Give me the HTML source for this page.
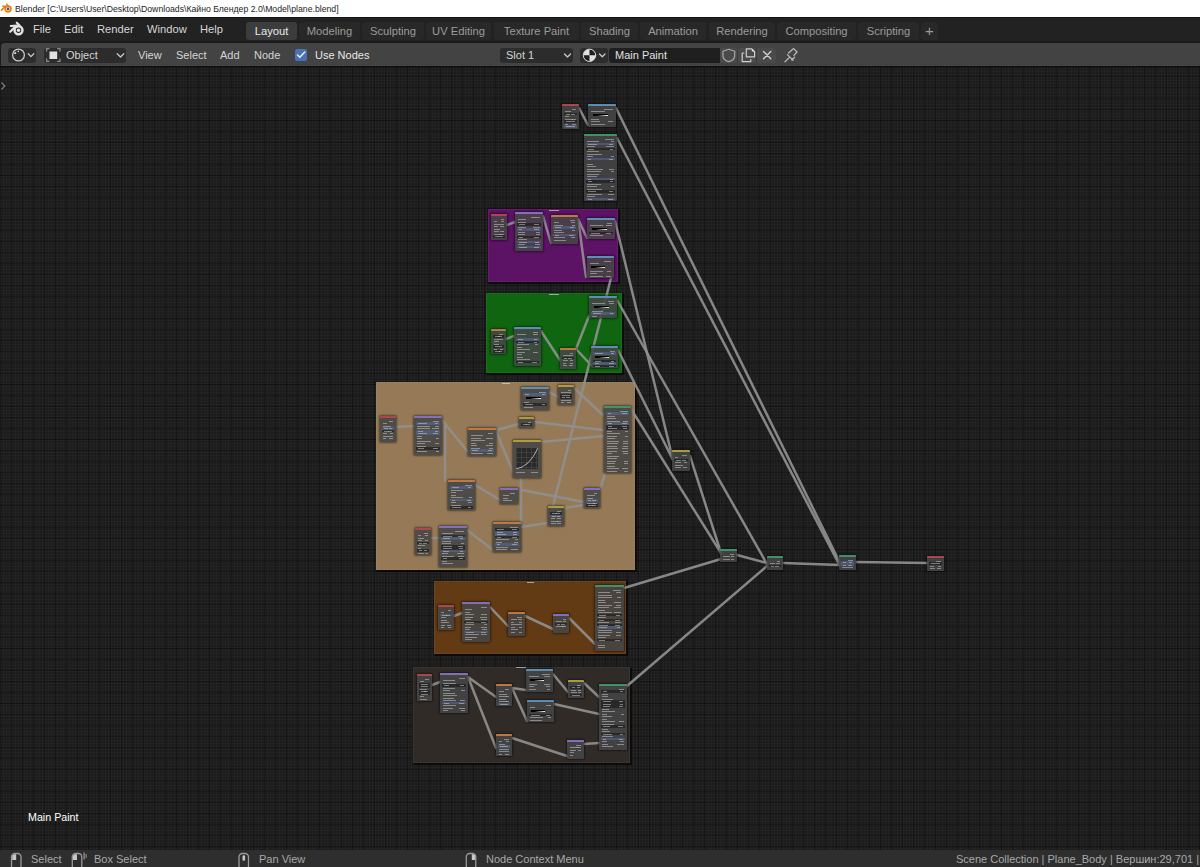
<!DOCTYPE html>
<html><head><meta charset="utf-8">
<style>
*{margin:0;padding:0;box-sizing:border-box}
html,body{width:1200px;height:867px;overflow:hidden;background:#1c1c1c;font-family:"Liberation Sans",sans-serif}
.abs{position:absolute}
#title{position:absolute;left:0;top:0;width:1200px;height:17px;background:#fff;color:#222;font-size:8.7px;line-height:17px;white-space:nowrap}
#title span{position:absolute;left:15px;top:1px}
#topbar{position:absolute;left:0;top:17px;width:1200px;height:26px;background:#222;border-top:1px solid #141414;border-bottom:2px solid #1b1b1b}
.tab{position:absolute;top:4px;height:18px;background:#282828;border-radius:3px;color:#9b9b9b;font-size:11.2px;line-height:18px;text-align:center;white-space:nowrap}
.tab.act{background:#3c3c3c;color:#eaeaea}
.mn{position:absolute;color:#d6d6d6;font-size:11.2px;line-height:14px;white-space:nowrap}
#header{position:absolute;left:1px;top:43px;width:1199px;height:23px;background:#434343;border-radius:4px 0 0 0}
.wd{position:absolute;top:4.5px;height:15px;background:#2c2c2c;border-radius:3px}
.ht{position:absolute;top:5px;color:#d4d4d4;font-size:11px;line-height:15px;white-space:nowrap}
#canvas{position:absolute;left:0;top:66px;width:1200px;height:784px;background-color:#1c1c1c;
 background-image:linear-gradient(90deg,rgba(0,0,0,0.28) 1px,transparent 1px),linear-gradient(0deg,rgba(0,0,0,0.28) 1px,transparent 1px),
 linear-gradient(90deg,rgba(255,255,255,0.025) 1px,transparent 1px),linear-gradient(0deg,rgba(255,255,255,0.025) 1px,transparent 1px);
 background-size:11px 11px,11px 11px,3px 3px,3px 3px;overflow:hidden}
#status{position:absolute;left:0;top:850px;width:1200px;height:17px;background:#2e2e2e;color:#a8a8a8;font-size:11px;line-height:17px;white-space:nowrap}
#status span{position:absolute;top:1px}
.fr{position:absolute;box-shadow:inset 0 0 0 1px rgba(255,255,255,0.05),0 0 1px 1.5px rgba(0,0,0,0.6)}
.lk{position:absolute;left:0;top:0}
.lk line{stroke:#909090;stroke-width:2.5;stroke-linecap:round;opacity:0.92}
.nd{position:absolute;background:rgba(70,70,70,0.88);border-radius:1px;overflow:hidden;box-shadow:0 0 2px 1px rgba(0,0,0,0.45)}
.nd i{position:absolute;left:0;top:0;right:0;height:2.4px;opacity:0.9}
.nd b{position:absolute;height:1px;background:rgba(210,210,210,0.5)}
.nd u{position:absolute;left:2px;right:2px;height:2.6px}
.nd p{position:absolute;height:2px;background:linear-gradient(90deg,#000 0,#000 25%,#fff 100%);border-top:1px solid #000}
.nd s{position:absolute;background:#2a2a2a;background-image:linear-gradient(90deg,rgba(255,255,255,0.08) 1px,transparent 1px),linear-gradient(0deg,rgba(255,255,255,0.08) 1px,transparent 1px);background-size:5px 5px}
</style></head><body>
<div id="title"><svg class="abs" style="left:0;top:0" width="16" height="16" viewBox="0 0 16 16"><g stroke="#e87d0d" stroke-linecap="round" fill="none"><circle cx="8.1" cy="8.9" r="2.8" stroke-width="1.7"/><line x1="6.6" y1="4.2" x2="8.2" y2="6" stroke-width="1.5"/><line x1="2.8" y1="6.3" x2="6.8" y2="6.2" stroke-width="1.6"/><line x1="1.5" y1="10.2" x2="4.6" y2="7.4" stroke-width="1.6"/></g><circle cx="8.1" cy="8.9" r="1.3" fill="#2f5d7c"/></svg><span>Blender [C:\Users\User\Desktop\Downloads\Кайно Блендер 2.0\Model\plane.blend]</span></div>
<div id="topbar">
<svg class="abs" style="left:5px;top:0px" width="25" height="22" viewBox="0 0 25 22"><g stroke="#e2e2e2" stroke-linecap="round" fill="none" stroke-width="2.2"><circle cx="13.5" cy="12.2" r="3.95" stroke-width="2.5"/><line x1="11.8" y1="4.7" x2="14.6" y2="7.6"/><line x1="5.8" y1="8" x2="12.3" y2="7.6"/><line x1="5.2" y1="13.7" x2="9.8" y2="9.1"/></g><circle cx="13.5" cy="12.2" r="1.8" fill="#e2e2e2"/></svg>
<span class="mn" style="left:33px;top:4px">File</span>
<span class="mn" style="left:64px;top:4px">Edit</span>
<span class="mn" style="left:97px;top:4px">Render</span>
<span class="mn" style="left:147px;top:4px">Window</span>
<span class="mn" style="left:200px;top:4px">Help</span>
<div class="tab act" style="left:246px;width:51px">Layout</div>
<div class="tab" style="left:299px;width:61px">Modeling</div>
<div class="tab" style="left:362px;width:62px">Sculpting</div>
<div class="tab" style="left:426px;width:65px">UV Editing</div>
<div class="tab" style="left:494px;width:85px">Texture Paint</div>
<div class="tab" style="left:581px;width:57px">Shading</div>
<div class="tab" style="left:640px;width:66px">Animation</div>
<div class="tab" style="left:709px;width:66px">Rendering</div>
<div class="tab" style="left:777px;width:79px">Compositing</div>
<div class="tab" style="left:858px;width:61px">Scripting</div>
<div class="tab" style="left:921px;width:17px;font-size:15px">+</div>
</div>
<div id="header">
<div class="wd" style="left:7px;width:28px"></div>
<div class="wd" style="left:43px;width:82px"></div>
<span class="ht" style="left:65px">Object</span>
<span class="ht" style="left:137px">View</span>
<span class="ht" style="left:175px">Select</span>
<span class="ht" style="left:219px">Add</span>
<span class="ht" style="left:253px">Node</span>
<div class="abs" style="left:294px;top:5.7px;width:12px;height:12px;background:#4772b3;border-radius:2px"></div>
<span class="ht" style="left:314px;color:#e6e6e6">Use Nodes</span>
<div class="wd" style="left:499px;width:73px"></div>
<span class="ht" style="left:505px">Slot 1</span>
<div class="wd" style="left:579px;width:28px"></div>
<div class="wd" style="left:608px;width:112px;background:#1f1f1f;border-radius:3px 0 0 3px"></div>
<span class="ht" style="left:614px;color:#e0e0e0">Main Paint</span>
<div class="wd" style="left:719px;width:56px;background:#4a4a4a;border-radius:0 3px 3px 0"></div>
<div class="abs" style="left:736px;top:4px;width:1px;height:16px;background:#3a3a3a"></div><div class="abs" style="left:755px;top:4px;width:1px;height:16px;background:#3a3a3a"></div>
<svg class="abs" style="left:-1px;top:-43px" width="1200" height="70" viewBox="0 0 1200 70">
<g fill="none" stroke-linecap="round" stroke-linejoin="round">
<circle cx="18.5" cy="55" r="5.9" stroke="#c9c9c9" stroke-width="1.3"/>
<circle cx="15.2" cy="53.2" r="1.1" fill="#d0d0d0" stroke="none"/><circle cx="18.3" cy="51.4" r="0.8" fill="#d0d0d0" stroke="none"/>
<polyline points="28.3,53.8 31,56.6 33.8,53.8" stroke="#c9c9c9" stroke-width="1.3"/>
<path d="M46.6 51 V48.6 H49 M57.6 48.6 H60 V51 M60 59 V61.4 H57.6 M49 61.4 H46.6 V59" stroke="#8a8a8a" stroke-width="1.3"/>
<rect x="49.5" y="51.5" width="7.7" height="7.5" fill="#e2e2e2" stroke="none"/>
<polyline points="117.2,53.8 120.5,57 123.8,53.8" stroke="#c9c9c9" stroke-width="1.3"/>
<polyline points="297.5,55 299.8,57.3 304.8,52" stroke="#e8eeff" stroke-width="1.5"/>
<polyline points="564.5,54 567.5,57 570.5,54" stroke="#c9c9c9" stroke-width="1.3"/>
<circle cx="589.5" cy="55.3" r="6.2" fill="#e0e0e0" stroke="none"/>
<path d="M589.5 55.3 V49.1 A6.2 6.2 0 0 1 595.7 55.3 Z" fill="#1e1e1e" stroke="none"/>
<path d="M589.5 55.3 V61.5 A6.2 6.2 0 0 1 583.3 55.3 Z" fill="#1e1e1e" stroke="none"/>
<circle cx="589.5" cy="55.3" r="6.2" stroke="#d8d8d8" stroke-width="1"/>
<polyline points="599.5,54 602.3,56.8 605,54" stroke="#c9c9c9" stroke-width="1.3"/>
<path d="M728.8 49.3 L734.7 51.3 V55.5 C734.7 58.8 732.2 60.7 728.8 61.7 C725.4 60.7 722.9 58.8 722.9 55.5 V51.3 Z" stroke="#a8a8a8" stroke-width="1.2"/>
<path d="M746.3 56.8 V48.8 H751.8 L754.6 51.6 V56.8 Z" stroke="#cfcfcf" stroke-width="1.2"/>
<path d="M751.8 48.8 L754.6 51.6 H751.8 Z" fill="#e0e0e0" stroke="none"/>
<path d="M743.8 53 H742.2 V61.6 H750.8 V59.6" stroke="#cfcfcf" stroke-width="1.2"/>
<path d="M763.5 51.5 L770.8 58.8 M770.8 51.5 L763.5 58.8" stroke="#d0d0d0" stroke-width="1.4"/>
<path d="M790.2 51.5 L793.6 48.6 L797 52 L794 55.4 M787.4 54.6 L793 60.2 M788.6 53 L791.6 50.2 M794.6 57.2 L791.8 60 M785 61.8 L789.4 57.4" stroke="#b8b8b8" stroke-width="1.3"/>
</g></svg>
</div>
<div id="canvas"></div>
<div class="abs" style="left:0;top:66px;width:1200px;height:784px;overflow:hidden">
<div style="position:absolute;left:0;top:-66px;width:1200px;height:867px">
<div class="fr" style="left:488px;top:209px;width:130px;height:73px;background:#5c1265"></div>
<div class="fr" style="left:486px;top:293px;width:136px;height:80px;background:#0f6510"></div>
<div class="fr" style="left:376px;top:382px;width:259px;height:188px;background:#967a57"></div>
<div class="fr" style="left:434px;top:581px;width:192px;height:73px;background:#623a13"></div>
<div class="fr" style="left:413px;top:667px;width:217px;height:96px;background:#312b28"></div>
<div style="position:absolute;left:549px;top:210px;width:10px;height:1.3px;background:rgba(230,230,230,0.6)"></div>
<div style="position:absolute;left:549px;top:294px;width:10px;height:1.3px;background:rgba(230,230,230,0.6)"></div>
<div style="position:absolute;left:502px;top:383px;width:8px;height:1.3px;background:rgba(230,230,230,0.6)"></div>
<div style="position:absolute;left:527px;top:582px;width:7px;height:1.3px;background:rgba(230,230,230,0.6)"></div>
<div style="position:absolute;left:516px;top:667px;width:10px;height:1.3px;background:rgba(230,230,230,0.6)"></div>
<svg class="lk" width="1200" height="867" viewBox="0 0 1200 867">
<line x1="579" y1="108" x2="588" y2="125"/>
<line x1="616" y1="108" x2="840" y2="563"/>
<line x1="617" y1="138" x2="840" y2="566"/>
<line x1="507" y1="225" x2="515" y2="222"/>
<line x1="543" y1="216" x2="551" y2="243"/>
<line x1="578" y1="219" x2="587" y2="238"/>
<line x1="578" y1="219" x2="586" y2="277"/>
<line x1="615" y1="221" x2="673" y2="460"/>
<line x1="611" y1="278" x2="553" y2="506"/>
<line x1="506" y1="339" x2="514" y2="336"/>
<line x1="541" y1="331" x2="560" y2="360"/>
<line x1="576" y1="349" x2="589" y2="316"/>
<line x1="576" y1="349" x2="591" y2="365"/>
<line x1="617" y1="300" x2="767" y2="564"/>
<line x1="618" y1="350" x2="673" y2="460"/>
<line x1="396" y1="427" x2="414" y2="426"/>
<line x1="442" y1="420" x2="468" y2="452"/>
<line x1="445" y1="426" x2="445" y2="481"/>
<line x1="496" y1="430" x2="519" y2="424"/>
<line x1="496" y1="431" x2="513" y2="472"/>
<line x1="549" y1="392" x2="558" y2="397"/>
<line x1="574" y1="388" x2="603" y2="415"/>
<line x1="535" y1="422" x2="603" y2="430"/>
<line x1="541" y1="442" x2="603" y2="436"/>
<line x1="475" y1="485" x2="500" y2="500"/>
<line x1="521" y1="478" x2="521" y2="527"/>
<line x1="521" y1="527" x2="548" y2="523"/>
<line x1="522" y1="490" x2="584" y2="502"/>
<line x1="564" y1="508" x2="584" y2="505"/>
<line x1="600" y1="490" x2="606" y2="470"/>
<line x1="431" y1="538" x2="439" y2="538"/>
<line x1="467" y1="530" x2="493" y2="550"/>
<line x1="631" y1="409" x2="721" y2="553"/>
<line x1="690" y1="456" x2="721" y2="553"/>
<line x1="454" y1="616" x2="462" y2="613"/>
<line x1="490" y1="607" x2="508" y2="626"/>
<line x1="525" y1="616" x2="553" y2="629"/>
<line x1="569" y1="618" x2="595" y2="644"/>
<line x1="624" y1="588" x2="721" y2="559"/>
<line x1="432" y1="685" x2="440" y2="682"/>
<line x1="468" y1="677" x2="496" y2="697"/>
<line x1="468" y1="677" x2="496" y2="748"/>
<line x1="512" y1="688" x2="526" y2="690"/>
<line x1="512" y1="688" x2="527" y2="721"/>
<line x1="553" y1="674" x2="568" y2="692"/>
<line x1="584" y1="683" x2="599" y2="697"/>
<line x1="554" y1="704" x2="599" y2="714"/>
<line x1="512" y1="738" x2="567" y2="756"/>
<line x1="584" y1="744" x2="599" y2="743"/>
<line x1="627" y1="686" x2="767" y2="566"/>
<line x1="737" y1="555" x2="767" y2="563"/>
<line x1="783" y1="563" x2="840" y2="565"/>
<line x1="856" y1="562" x2="928" y2="563"/>
</svg>
<div class="nd" style="left:562px;top:104px;width:17px;height:25px"><i style="background:#b9464d"></i><b style="left:10px;top:4.5px;width:4px"></b><b style="left:3px;top:7.0px;width:6px"></b><u style="top:8.5px;background:rgba(24,24,24,0.6)"></u><b style="left:4px;top:9.5px;width:4px"></b><b style="left:9px;top:9.5px;width:4px"></b><b style="left:3px;top:12.0px;width:4px"></b><b style="left:3px;top:14.5px;width:8px"></b><b style="left:10px;top:14.5px;width:4px"></b><u style="top:16.0px;background:rgba(24,24,24,0.6)"></u><b style="left:4px;top:17.0px;width:5px"></b><b style="left:9px;top:17.0px;width:4px"></b><b style="left:3px;top:19.5px;width:3px"></b><b style="left:10px;top:19.5px;width:4px"></b><u style="top:21.0px;background:rgba(84,104,150,0.6)"></u><b style="left:4px;top:22.0px;width:5px"></b><b style="left:9px;top:22.0px;width:4px"></b></div>
<div class="nd" style="left:588px;top:104px;width:28px;height:23px"><i style="background:#5f97c2"></i><b style="left:16px;top:4.5px;width:9px"></b><b style="left:3px;top:7.0px;width:14px"></b><p style="left:5px;top:9.5px;width:15px"></p><b style="left:3px;top:14.5px;width:8px"></b><b style="left:3px;top:17.0px;width:9px"></b><b style="left:20px;top:17.0px;width:5px"></b><b style="left:3px;top:19.5px;width:14px"></b></div>
<div class="nd" style="left:584px;top:134px;width:33px;height:67px"><i style="background:#3f9a70"></i><b style="left:21px;top:4.5px;width:9px"></b><b style="left:3px;top:7.0px;width:12px"></b><b style="left:27px;top:7.0px;width:3px"></b><u style="top:8.5px;background:rgba(84,104,150,0.6)"></u><b style="left:4px;top:9.5px;width:9px"></b><b style="left:25px;top:9.5px;width:4px"></b><b style="left:3px;top:12.0px;width:8px"></b><b style="left:22px;top:12.0px;width:8px"></b><u style="top:13.5px;background:rgba(24,24,24,0.6)"></u><b style="left:4px;top:14.5px;width:6px"></b><b style="left:26px;top:14.5px;width:3px"></b><b style="left:3px;top:17.0px;width:12px"></b><b style="left:3px;top:19.5px;width:15px"></b><b style="left:3px;top:22.0px;width:6px"></b><b style="left:27px;top:22.0px;width:3px"></b><u style="top:23.5px;background:rgba(84,104,150,0.6)"></u><b style="left:4px;top:24.5px;width:3px"></b><b style="left:25px;top:24.5px;width:4px"></b><b style="left:3px;top:29.5px;width:6px"></b><b style="left:3px;top:32.0px;width:9px"></b><b style="left:3px;top:34.5px;width:16px"></b><b style="left:25px;top:34.5px;width:5px"></b><b style="left:3px;top:37.0px;width:14px"></b><b style="left:27px;top:37.0px;width:3px"></b><b style="left:3px;top:39.5px;width:12px"></b><b style="left:3px;top:42.0px;width:10px"></b><u style="top:43.5px;background:rgba(84,104,150,0.6)"></u><b style="left:4px;top:44.5px;width:3px"></b><b style="left:26px;top:44.5px;width:3px"></b><u style="top:46.0px;background:rgba(24,24,24,0.6)"></u><b style="left:4px;top:47.0px;width:4px"></b><b style="left:26px;top:47.0px;width:3px"></b><b style="left:3px;top:49.5px;width:14px"></b><b style="left:3px;top:52.0px;width:10px"></b><b style="left:27px;top:52.0px;width:3px"></b><b style="left:3px;top:54.5px;width:15px"></b><u style="top:56.0px;background:rgba(24,24,24,0.6)"></u><b style="left:4px;top:57.0px;width:8px"></b><b style="left:25px;top:57.0px;width:4px"></b><b style="left:3px;top:59.5px;width:15px"></b><b style="left:24px;top:59.5px;width:6px"></b><b style="left:3px;top:62.0px;width:8px"></b><u style="top:63.5px;background:rgba(84,104,150,0.6)"></u><b style="left:4px;top:64.5px;width:4px"></b><b style="left:24px;top:64.5px;width:5px"></b></div>
<div class="nd" style="left:491px;top:214px;width:16px;height:26px"><i style="background:#b9464d"></i><b style="left:10px;top:4.5px;width:3px"></b><b style="left:3px;top:7.0px;width:3px"></b><b style="left:10px;top:7.0px;width:3px"></b><b style="left:3px;top:9.5px;width:7px"></b><b style="left:10px;top:9.5px;width:3px"></b><b style="left:3px;top:12.0px;width:4px"></b><b style="left:9px;top:12.0px;width:4px"></b><b style="left:3px;top:14.5px;width:6px"></b><b style="left:3px;top:17.0px;width:5px"></b><b style="left:9px;top:17.0px;width:4px"></b><b style="left:3px;top:19.5px;width:7px"></b><b style="left:9px;top:19.5px;width:4px"></b><u style="top:21.0px;background:rgba(24,24,24,0.6)"></u><b style="left:4px;top:22.0px;width:5px"></b><b style="left:9px;top:22.0px;width:3px"></b></div>
<div class="nd" style="left:515px;top:212px;width:28px;height:39px"><i style="background:#8a74c6"></i><b style="left:16px;top:4.5px;width:9px"></b><b style="left:3px;top:7.0px;width:8px"></b><b style="left:3px;top:9.5px;width:8px"></b><u style="top:11.0px;background:rgba(24,24,24,0.6)"></u><b style="left:4px;top:12.0px;width:6px"></b><b style="left:19px;top:12.0px;width:5px"></b><b style="left:3px;top:14.5px;width:8px"></b><b style="left:18px;top:14.5px;width:7px"></b><u style="top:16.0px;background:rgba(84,104,150,0.6)"></u><b style="left:4px;top:17.0px;width:3px"></b><b style="left:19px;top:17.0px;width:5px"></b><b style="left:3px;top:19.5px;width:7px"></b><b style="left:21px;top:19.5px;width:4px"></b><b style="left:3px;top:22.0px;width:7px"></b><b style="left:21px;top:22.0px;width:4px"></b><u style="top:23.5px;background:rgba(24,24,24,0.6)"></u><b style="left:4px;top:24.5px;width:4px"></b><b style="left:19px;top:24.5px;width:5px"></b><b style="left:3px;top:27.0px;width:9px"></b><u style="top:28.5px;background:rgba(84,104,150,0.6)"></u><b style="left:4px;top:29.5px;width:8px"></b><b style="left:20px;top:29.5px;width:4px"></b><b style="left:3px;top:32.0px;width:7px"></b><b style="left:20px;top:32.0px;width:5px"></b><u style="top:33.5px;background:rgba(84,104,150,0.6)"></u><b style="left:4px;top:34.5px;width:8px"></b><b style="left:19px;top:34.5px;width:5px"></b></div>
<div class="nd" style="left:551px;top:215px;width:27px;height:29px"><i style="background:#c97e45"></i><b style="left:19px;top:4.5px;width:5px"></b><b style="left:3px;top:7.0px;width:5px"></b><b style="left:20px;top:7.0px;width:4px"></b><b style="left:3px;top:9.5px;width:9px"></b><b style="left:21px;top:9.5px;width:3px"></b><u style="top:11.0px;background:rgba(84,104,150,0.6)"></u><b style="left:4px;top:12.0px;width:6px"></b><b style="left:19px;top:12.0px;width:4px"></b><b style="left:3px;top:14.5px;width:8px"></b><b style="left:21px;top:14.5px;width:3px"></b><b style="left:3px;top:17.0px;width:10px"></b><u style="top:18.5px;background:rgba(84,104,150,0.6)"></u><b style="left:4px;top:19.5px;width:4px"></b><b style="left:18px;top:19.5px;width:5px"></b><b style="left:3px;top:22.0px;width:11px"></b><b style="left:20px;top:22.0px;width:4px"></b><b style="left:3px;top:24.5px;width:12px"></b></div>
<div class="nd" style="left:587px;top:218px;width:28px;height:21px"><i style="background:#5f97c2"></i><b style="left:20px;top:4.5px;width:5px"></b><b style="left:3px;top:7.0px;width:13px"></b><b style="left:19px;top:7.0px;width:6px"></b><p style="left:5px;top:9.5px;width:15px"></p><u style="top:13.5px;background:rgba(24,24,24,0.6)"></u><b style="left:4px;top:14.5px;width:9px"></b><b style="left:19px;top:14.5px;width:5px"></b><b style="left:3px;top:17.0px;width:13px"></b></div>
<div class="nd" style="left:587px;top:256px;width:27px;height:22px"><i style="background:#5f97c2"></i><b style="left:17px;top:4.5px;width:7px"></b><b style="left:3px;top:7.0px;width:9px"></b><p style="left:4px;top:9.5px;width:14px"></p><b style="left:3px;top:14.5px;width:13px"></b><b style="left:20px;top:14.5px;width:4px"></b><b style="left:3px;top:17.0px;width:7px"></b><b style="left:3px;top:19.5px;width:13px"></b><b style="left:19px;top:19.5px;width:5px"></b></div>
<div class="nd" style="left:491px;top:329px;width:15px;height:25px"><i style="background:#c97e45"></i><b style="left:8px;top:4.5px;width:4px"></b><u style="top:6.0px;background:rgba(24,24,24,0.6)"></u><b style="left:4px;top:7.0px;width:5px"></b><b style="left:7px;top:7.0px;width:4px"></b><b style="left:3px;top:9.5px;width:5px"></b><b style="left:8px;top:9.5px;width:4px"></b><b style="left:3px;top:12.0px;width:5px"></b><b style="left:3px;top:14.5px;width:5px"></b><u style="top:16.0px;background:rgba(24,24,24,0.6)"></u><b style="left:4px;top:17.0px;width:3px"></b><b style="left:7px;top:17.0px;width:4px"></b><b style="left:3px;top:19.5px;width:3px"></b><b style="left:9px;top:19.5px;width:3px"></b><u style="top:21.0px;background:rgba(24,24,24,0.6)"></u><b style="left:4px;top:22.0px;width:5px"></b><b style="left:8px;top:22.0px;width:3px"></b></div>
<div class="nd" style="left:514px;top:327px;width:27px;height:39px"><i style="background:#5f97c2"></i><b style="left:19px;top:4.5px;width:5px"></b><b style="left:3px;top:7.0px;width:9px"></b><b style="left:19px;top:7.0px;width:5px"></b><u style="top:11.0px;background:rgba(84,104,150,0.6)"></u><b style="left:4px;top:12.0px;width:5px"></b><b style="left:20px;top:12.0px;width:3px"></b><u style="top:13.5px;background:rgba(24,24,24,0.6)"></u><b style="left:4px;top:14.5px;width:6px"></b><b style="left:20px;top:14.5px;width:3px"></b><b style="left:3px;top:17.0px;width:12px"></b><b style="left:21px;top:17.0px;width:3px"></b><b style="left:3px;top:19.5px;width:5px"></b><b style="left:3px;top:22.0px;width:13px"></b><b style="left:3px;top:24.5px;width:8px"></b><b style="left:19px;top:24.5px;width:5px"></b><b style="left:3px;top:27.0px;width:5px"></b><b style="left:3px;top:29.5px;width:6px"></b><b style="left:3px;top:32.0px;width:13px"></b><u style="top:33.5px;background:rgba(24,24,24,0.6)"></u><b style="left:4px;top:34.5px;width:5px"></b><b style="left:18px;top:34.5px;width:5px"></b></div>
<div class="nd" style="left:560px;top:348px;width:16px;height:21px"><i style="background:#c97e45"></i><b style="left:10px;top:4.5px;width:3px"></b><b style="left:3px;top:7.0px;width:7px"></b><b style="left:9px;top:7.0px;width:4px"></b><u style="top:8.5px;background:rgba(24,24,24,0.6)"></u><b style="left:4px;top:9.5px;width:3px"></b><b style="left:8px;top:9.5px;width:4px"></b><b style="left:3px;top:12.0px;width:5px"></b><b style="left:10px;top:12.0px;width:3px"></b><b style="left:3px;top:14.5px;width:3px"></b><b style="left:10px;top:14.5px;width:3px"></b><b style="left:3px;top:17.0px;width:4px"></b><b style="left:9px;top:17.0px;width:4px"></b></div>
<div class="nd" style="left:589px;top:296px;width:28px;height:22px"><i style="background:#5f97c2"></i><b style="left:19px;top:4.5px;width:6px"></b><b style="left:3px;top:7.0px;width:13px"></b><b style="left:20px;top:7.0px;width:5px"></b><p style="left:5px;top:9.5px;width:15px"></p><b style="left:3px;top:14.5px;width:11px"></b><u style="top:16.0px;background:rgba(84,104,150,0.6)"></u><b style="left:4px;top:17.0px;width:8px"></b><b style="left:21px;top:17.0px;width:3px"></b><b style="left:3px;top:19.5px;width:5px"></b></div>
<div class="nd" style="left:591px;top:346px;width:27px;height:22px"><i style="background:#5f97c2"></i><b style="left:19px;top:4.5px;width:5px"></b><u style="top:6.0px;background:rgba(84,104,150,0.6)"></u><b style="left:4px;top:7.0px;width:8px"></b><b style="left:20px;top:7.0px;width:3px"></b><p style="left:4px;top:9.5px;width:14px"></p><u style="top:13.5px;background:rgba(24,24,24,0.6)"></u><b style="left:4px;top:14.5px;width:6px"></b><b style="left:20px;top:14.5px;width:3px"></b><u style="top:16.0px;background:rgba(84,104,150,0.6)"></u><b style="left:4px;top:17.0px;width:4px"></b><b style="left:18px;top:17.0px;width:5px"></b><u style="top:18.5px;background:rgba(24,24,24,0.6)"></u><b style="left:4px;top:19.5px;width:5px"></b><b style="left:18px;top:19.5px;width:5px"></b></div>
<div class="nd" style="left:380px;top:416px;width:16px;height:26px"><i style="background:#b9464d"></i><b style="left:9px;top:4.5px;width:4px"></b><b style="left:3px;top:7.0px;width:4px"></b><b style="left:3px;top:9.5px;width:8px"></b><u style="top:11.0px;background:rgba(84,104,150,0.6)"></u><b style="left:4px;top:12.0px;width:4px"></b><b style="left:9px;top:12.0px;width:3px"></b><u style="top:13.5px;background:rgba(24,24,24,0.6)"></u><b style="left:4px;top:14.5px;width:5px"></b><b style="left:8px;top:14.5px;width:4px"></b><b style="left:3px;top:17.0px;width:4px"></b><b style="left:10px;top:17.0px;width:3px"></b><b style="left:3px;top:19.5px;width:6px"></b><b style="left:9px;top:19.5px;width:4px"></b><b style="left:3px;top:22.0px;width:3px"></b><b style="left:9px;top:22.0px;width:4px"></b></div>
<div class="nd" style="left:414px;top:416px;width:28px;height:39px"><i style="background:#8a74c6"></i><b style="left:19px;top:4.5px;width:6px"></b><u style="top:6.0px;background:rgba(84,104,150,0.6)"></u><b style="left:4px;top:7.0px;width:9px"></b><b style="left:21px;top:7.0px;width:3px"></b><b style="left:3px;top:9.5px;width:13px"></b><b style="left:21px;top:9.5px;width:4px"></b><b style="left:3px;top:12.0px;width:13px"></b><b style="left:18px;top:12.0px;width:7px"></b><u style="top:13.5px;background:rgba(84,104,150,0.6)"></u><b style="left:4px;top:14.5px;width:5px"></b><b style="left:21px;top:14.5px;width:3px"></b><u style="top:16.0px;background:rgba(84,104,150,0.6)"></u><b style="left:4px;top:17.0px;width:9px"></b><b style="left:19px;top:17.0px;width:5px"></b><b style="left:3px;top:19.5px;width:5px"></b><b style="left:3px;top:22.0px;width:5px"></b><b style="left:22px;top:22.0px;width:3px"></b><b style="left:3px;top:24.5px;width:14px"></b><b style="left:3px;top:27.0px;width:8px"></b><b style="left:21px;top:27.0px;width:4px"></b><b style="left:3px;top:29.5px;width:9px"></b><u style="top:31.0px;background:rgba(24,24,24,0.6)"></u><b style="left:4px;top:32.0px;width:6px"></b><b style="left:19px;top:32.0px;width:5px"></b><b style="left:3px;top:34.5px;width:10px"></b><b style="left:22px;top:34.5px;width:3px"></b></div>
<div class="nd" style="left:468px;top:428px;width:28px;height:28px"><i style="background:#c97e45"></i><b style="left:20px;top:4.5px;width:5px"></b><b style="left:3px;top:7.0px;width:12px"></b><b style="left:3px;top:9.5px;width:10px"></b><b style="left:18px;top:9.5px;width:7px"></b><b style="left:3px;top:12.0px;width:14px"></b><b style="left:3px;top:14.5px;width:5px"></b><b style="left:21px;top:14.5px;width:4px"></b><b style="left:3px;top:17.0px;width:6px"></b><b style="left:18px;top:17.0px;width:7px"></b><b style="left:3px;top:19.5px;width:9px"></b><b style="left:21px;top:19.5px;width:4px"></b><u style="top:21.0px;background:rgba(84,104,150,0.6)"></u><b style="left:4px;top:22.0px;width:6px"></b><b style="left:20px;top:22.0px;width:4px"></b><b style="left:3px;top:24.5px;width:12px"></b><b style="left:19px;top:24.5px;width:6px"></b></div>
<div class="nd" style="left:521px;top:387px;width:28px;height:23px"><i style="background:#5f97c2"></i><b style="left:18px;top:4.5px;width:7px"></b><u style="top:6.0px;background:rgba(84,104,150,0.6)"></u><b style="left:4px;top:7.0px;width:4px"></b><b style="left:21px;top:7.0px;width:3px"></b><p style="left:5px;top:9.5px;width:15px"></p><b style="left:3px;top:14.5px;width:5px"></b><u style="top:16.0px;background:rgba(24,24,24,0.6)"></u><b style="left:4px;top:17.0px;width:8px"></b><b style="left:21px;top:17.0px;width:3px"></b><b style="left:3px;top:19.5px;width:9px"></b></div>
<div class="nd" style="left:558px;top:385px;width:16px;height:20px"><i style="background:#b9a43c"></i><b style="left:10px;top:4.5px;width:3px"></b><b style="left:3px;top:7.0px;width:7px"></b><b style="left:10px;top:7.0px;width:3px"></b><u style="top:8.5px;background:rgba(24,24,24,0.6)"></u><b style="left:4px;top:9.5px;width:4px"></b><b style="left:8px;top:9.5px;width:4px"></b><u style="top:11.0px;background:rgba(24,24,24,0.6)"></u><b style="left:4px;top:12.0px;width:3px"></b><b style="left:8px;top:12.0px;width:4px"></b><b style="left:3px;top:14.5px;width:7px"></b><b style="left:10px;top:14.5px;width:3px"></b><b style="left:3px;top:17.0px;width:3px"></b><b style="left:9px;top:17.0px;width:4px"></b></div>
<div class="nd" style="left:519px;top:417px;width:15px;height:11px"><i style="background:#b9a43c"></i><b style="left:9px;top:4.5px;width:3px"></b><u style="top:6.0px;background:rgba(24,24,24,0.6)"></u><b style="left:4px;top:7.0px;width:4px"></b><b style="left:7px;top:7.0px;width:4px"></b></div>
<div class="nd" style="left:513px;top:440px;width:28px;height:38px"><i style="background:#b9a43c"></i><s style="left:3px;top:8px;width:22px;height:21px"></s><svg style="position:absolute;left:3px;top:8px" width="22" height="21"><path d="M0 21 Q13.2 19 22 0" stroke="#cfcfcf" stroke-width="0.8" fill="none"/></svg><b style="left:3px;top:32px;width:9px"></b><b style="left:18px;top:32px;width:7px"></b></div>
<div class="nd" style="left:604px;top:406px;width:27px;height:67px"><i style="background:#3f9a70"></i><b style="left:16px;top:4.5px;width:8px"></b><u style="top:6.0px;background:rgba(84,104,150,0.6)"></u><b style="left:4px;top:7.0px;width:3px"></b><b style="left:18px;top:7.0px;width:5px"></b><b style="left:3px;top:9.5px;width:8px"></b><b style="left:3px;top:12.0px;width:9px"></b><b style="left:3px;top:14.5px;width:13px"></b><b style="left:19px;top:14.5px;width:5px"></b><u style="top:16.0px;background:rgba(84,104,150,0.6)"></u><b style="left:4px;top:17.0px;width:4px"></b><b style="left:18px;top:17.0px;width:5px"></b><u style="top:18.5px;background:rgba(24,24,24,0.6)"></u><b style="left:4px;top:19.5px;width:4px"></b><b style="left:18px;top:19.5px;width:5px"></b><u style="top:21.0px;background:rgba(24,24,24,0.6)"></u><b style="left:4px;top:22.0px;width:9px"></b><b style="left:19px;top:22.0px;width:4px"></b><b style="left:3px;top:24.5px;width:5px"></b><b style="left:21px;top:24.5px;width:3px"></b><b style="left:3px;top:27.0px;width:13px"></b><b style="left:3px;top:29.5px;width:10px"></b><b style="left:21px;top:29.5px;width:3px"></b><b style="left:3px;top:32.0px;width:8px"></b><b style="left:3px;top:34.5px;width:12px"></b><b style="left:19px;top:34.5px;width:5px"></b><b style="left:3px;top:37.0px;width:11px"></b><b style="left:19px;top:37.0px;width:5px"></b><b style="left:3px;top:39.5px;width:10px"></b><b style="left:19px;top:39.5px;width:5px"></b><b style="left:3px;top:42.0px;width:11px"></b><b style="left:18px;top:42.0px;width:6px"></b><b style="left:3px;top:44.5px;width:10px"></b><b style="left:18px;top:44.5px;width:6px"></b><b style="left:3px;top:47.0px;width:5px"></b><b style="left:19px;top:47.0px;width:5px"></b><b style="left:3px;top:49.5px;width:12px"></b><b style="left:3px;top:52.0px;width:10px"></b><b style="left:3px;top:54.5px;width:9px"></b><b style="left:20px;top:54.5px;width:4px"></b><b style="left:3px;top:57.0px;width:8px"></b><b style="left:20px;top:57.0px;width:4px"></b><b style="left:3px;top:59.5px;width:8px"></b><b style="left:3px;top:62.0px;width:12px"></b><b style="left:18px;top:62.0px;width:6px"></b><b style="left:3px;top:64.5px;width:10px"></b><b style="left:20px;top:64.5px;width:4px"></b></div>
<div class="nd" style="left:448px;top:480px;width:27px;height:30px"><i style="background:#c97e45"></i><b style="left:17px;top:4.5px;width:7px"></b><u style="top:6.0px;background:rgba(84,104,150,0.6)"></u><b style="left:4px;top:7.0px;width:7px"></b><b style="left:20px;top:7.0px;width:3px"></b><b style="left:3px;top:9.5px;width:12px"></b><b style="left:3px;top:12.0px;width:5px"></b><b style="left:3px;top:14.5px;width:5px"></b><b style="left:3px;top:17.0px;width:12px"></b><b style="left:21px;top:17.0px;width:3px"></b><u style="top:18.5px;background:rgba(84,104,150,0.6)"></u><b style="left:4px;top:19.5px;width:3px"></b><b style="left:19px;top:19.5px;width:4px"></b><b style="left:3px;top:22.0px;width:5px"></b><b style="left:20px;top:22.0px;width:4px"></b><b style="left:3px;top:24.5px;width:10px"></b><u style="top:26.0px;background:rgba(24,24,24,0.6)"></u><b style="left:4px;top:27.0px;width:9px"></b><b style="left:20px;top:27.0px;width:3px"></b></div>
<div class="nd" style="left:500px;top:488px;width:18px;height:16px"><i style="background:#8a74c6"></i><b style="left:10px;top:4.5px;width:5px"></b><b style="left:3px;top:7.0px;width:6px"></b><b style="left:3px;top:9.5px;width:5px"></b><b style="left:3px;top:12.0px;width:9px"></b></div>
<div class="nd" style="left:584px;top:488px;width:16px;height:20px"><i style="background:#8a74c6"></i><b style="left:10px;top:4.5px;width:3px"></b><b style="left:3px;top:7.0px;width:8px"></b><b style="left:3px;top:9.5px;width:6px"></b><u style="top:11.0px;background:rgba(84,104,150,0.6)"></u><b style="left:4px;top:12.0px;width:3px"></b><b style="left:8px;top:12.0px;width:4px"></b><b style="left:3px;top:14.5px;width:8px"></b><b style="left:9px;top:14.5px;width:4px"></b><u style="top:16.0px;background:rgba(24,24,24,0.6)"></u><b style="left:4px;top:17.0px;width:5px"></b><b style="left:8px;top:17.0px;width:4px"></b></div>
<div class="nd" style="left:548px;top:506px;width:16px;height:20px"><i style="background:#b9a43c"></i><b style="left:9px;top:4.5px;width:4px"></b><u style="top:6.0px;background:rgba(24,24,24,0.6)"></u><b style="left:4px;top:7.0px;width:5px"></b><b style="left:8px;top:7.0px;width:4px"></b><u style="top:8.5px;background:rgba(84,104,150,0.6)"></u><b style="left:4px;top:9.5px;width:4px"></b><b style="left:9px;top:9.5px;width:3px"></b><b style="left:3px;top:12.0px;width:4px"></b><b style="left:9px;top:12.0px;width:4px"></b><b style="left:3px;top:14.5px;width:7px"></b><b style="left:9px;top:14.5px;width:4px"></b><b style="left:3px;top:17.0px;width:5px"></b><b style="left:9px;top:17.0px;width:4px"></b></div>
<div class="nd" style="left:415px;top:528px;width:16px;height:27px"><i style="background:#b9464d"></i><b style="left:9px;top:4.5px;width:4px"></b><b style="left:3px;top:7.0px;width:3px"></b><b style="left:10px;top:7.0px;width:3px"></b><b style="left:3px;top:9.5px;width:6px"></b><b style="left:3px;top:12.0px;width:4px"></b><b style="left:10px;top:12.0px;width:3px"></b><u style="top:13.5px;background:rgba(24,24,24,0.6)"></u><b style="left:4px;top:14.5px;width:3px"></b><b style="left:8px;top:14.5px;width:4px"></b><b style="left:3px;top:17.0px;width:7px"></b><b style="left:3px;top:19.5px;width:3px"></b><u style="top:21.0px;background:rgba(24,24,24,0.6)"></u><b style="left:4px;top:22.0px;width:3px"></b><b style="left:9px;top:22.0px;width:3px"></b><b style="left:3px;top:24.5px;width:6px"></b><b style="left:10px;top:24.5px;width:3px"></b></div>
<div class="nd" style="left:439px;top:526px;width:28px;height:41px"><i style="background:#8a74c6"></i><b style="left:16px;top:4.5px;width:9px"></b><b style="left:3px;top:7.0px;width:11px"></b><u style="top:8.5px;background:rgba(24,24,24,0.6)"></u><b style="left:4px;top:9.5px;width:9px"></b><b style="left:19px;top:9.5px;width:5px"></b><u style="top:11.0px;background:rgba(84,104,150,0.6)"></u><b style="left:4px;top:12.0px;width:7px"></b><b style="left:21px;top:12.0px;width:3px"></b><b style="left:3px;top:14.5px;width:9px"></b><b style="left:3px;top:17.0px;width:9px"></b><b style="left:22px;top:17.0px;width:3px"></b><u style="top:18.5px;background:rgba(24,24,24,0.6)"></u><b style="left:4px;top:19.5px;width:9px"></b><b style="left:19px;top:19.5px;width:5px"></b><u style="top:21.0px;background:rgba(24,24,24,0.6)"></u><b style="left:4px;top:22.0px;width:9px"></b><b style="left:20px;top:22.0px;width:4px"></b><u style="top:23.5px;background:rgba(84,104,150,0.6)"></u><b style="left:4px;top:24.5px;width:6px"></b><b style="left:21px;top:24.5px;width:3px"></b><b style="left:3px;top:27.0px;width:6px"></b><b style="left:18px;top:27.0px;width:7px"></b><b style="left:3px;top:29.5px;width:12px"></b><b style="left:19px;top:29.5px;width:6px"></b><u style="top:31.0px;background:rgba(24,24,24,0.6)"></u><b style="left:4px;top:32.0px;width:4px"></b><b style="left:20px;top:32.0px;width:4px"></b><b style="left:3px;top:34.5px;width:5px"></b><b style="left:3px;top:37.0px;width:11px"></b></div>
<div class="nd" style="left:493px;top:522px;width:28px;height:30px"><i style="background:#c97e45"></i><b style="left:17px;top:4.5px;width:8px"></b><u style="top:6.0px;background:rgba(24,24,24,0.6)"></u><b style="left:4px;top:7.0px;width:7px"></b><b style="left:19px;top:7.0px;width:5px"></b><u style="top:8.5px;background:rgba(84,104,150,0.6)"></u><b style="left:4px;top:9.5px;width:6px"></b><b style="left:20px;top:9.5px;width:4px"></b><u style="top:11.0px;background:rgba(84,104,150,0.6)"></u><b style="left:4px;top:12.0px;width:9px"></b><b style="left:20px;top:12.0px;width:4px"></b><u style="top:13.5px;background:rgba(24,24,24,0.6)"></u><b style="left:4px;top:14.5px;width:4px"></b><b style="left:19px;top:14.5px;width:5px"></b><b style="left:3px;top:17.0px;width:13px"></b><b style="left:22px;top:17.0px;width:3px"></b><b style="left:3px;top:19.5px;width:6px"></b><b style="left:21px;top:19.5px;width:4px"></b><u style="top:21.0px;background:rgba(84,104,150,0.6)"></u><b style="left:4px;top:22.0px;width:3px"></b><b style="left:19px;top:22.0px;width:5px"></b><b style="left:3px;top:24.5px;width:12px"></b><b style="left:3px;top:27.0px;width:11px"></b><b style="left:18px;top:27.0px;width:7px"></b></div>
<div class="nd" style="left:438px;top:605px;width:16px;height:25px"><i style="background:#b9464d"></i><b style="left:10px;top:4.5px;width:3px"></b><b style="left:3px;top:7.0px;width:3px"></b><u style="top:8.5px;background:rgba(84,104,150,0.6)"></u><b style="left:4px;top:9.5px;width:5px"></b><b style="left:8px;top:9.5px;width:4px"></b><b style="left:3px;top:12.0px;width:5px"></b><b style="left:3px;top:14.5px;width:6px"></b><b style="left:3px;top:17.0px;width:8px"></b><b style="left:3px;top:19.5px;width:4px"></b><b style="left:9px;top:19.5px;width:4px"></b><b style="left:3px;top:22.0px;width:3px"></b><b style="left:10px;top:22.0px;width:3px"></b></div>
<div class="nd" style="left:462px;top:602px;width:28px;height:40px"><i style="background:#8a74c6"></i><b style="left:19px;top:4.5px;width:6px"></b><b style="left:3px;top:7.0px;width:7px"></b><b style="left:3px;top:9.5px;width:5px"></b><b style="left:3px;top:12.0px;width:9px"></b><b style="left:19px;top:12.0px;width:6px"></b><b style="left:3px;top:14.5px;width:8px"></b><b style="left:18px;top:14.5px;width:7px"></b><b style="left:3px;top:17.0px;width:6px"></b><b style="left:19px;top:17.0px;width:6px"></b><u style="top:18.5px;background:rgba(24,24,24,0.6)"></u><b style="left:4px;top:19.5px;width:8px"></b><b style="left:19px;top:19.5px;width:5px"></b><b style="left:3px;top:22.0px;width:9px"></b><b style="left:22px;top:22.0px;width:3px"></b><b style="left:3px;top:24.5px;width:6px"></b><b style="left:19px;top:24.5px;width:6px"></b><b style="left:3px;top:27.0px;width:5px"></b><b style="left:20px;top:27.0px;width:5px"></b><u style="top:28.5px;background:rgba(84,104,150,0.6)"></u><b style="left:4px;top:29.5px;width:8px"></b><b style="left:19px;top:29.5px;width:5px"></b><b style="left:3px;top:32.0px;width:14px"></b><b style="left:19px;top:32.0px;width:6px"></b><b style="left:3px;top:34.5px;width:12px"></b><b style="left:3px;top:37.0px;width:7px"></b></div>
<div class="nd" style="left:508px;top:612px;width:17px;height:24px"><i style="background:#c97e45"></i><b style="left:9px;top:4.5px;width:5px"></b><b style="left:3px;top:7.0px;width:6px"></b><b style="left:10px;top:7.0px;width:4px"></b><b style="left:3px;top:9.5px;width:3px"></b><b style="left:11px;top:9.5px;width:3px"></b><b style="left:3px;top:12.0px;width:8px"></b><b style="left:11px;top:12.0px;width:3px"></b><b style="left:3px;top:14.5px;width:4px"></b><b style="left:11px;top:14.5px;width:3px"></b><b style="left:3px;top:17.0px;width:7px"></b><b style="left:3px;top:19.5px;width:4px"></b><b style="left:11px;top:19.5px;width:3px"></b></div>
<div class="nd" style="left:553px;top:614px;width:16px;height:19px"><i style="background:#8a74c6"></i><b style="left:10px;top:4.5px;width:3px"></b><b style="left:3px;top:7.0px;width:6px"></b><b style="left:10px;top:7.0px;width:3px"></b><u style="top:8.5px;background:rgba(24,24,24,0.6)"></u><b style="left:4px;top:9.5px;width:3px"></b><b style="left:8px;top:9.5px;width:4px"></b><b style="left:3px;top:12.0px;width:8px"></b><b style="left:9px;top:12.0px;width:4px"></b></div>
<div class="nd" style="left:595px;top:585px;width:29px;height:66px"><i style="background:#3f9a70"></i><b style="left:18px;top:4.5px;width:8px"></b><b style="left:3px;top:7.0px;width:12px"></b><b style="left:21px;top:7.0px;width:5px"></b><b style="left:3px;top:9.5px;width:14px"></b><b style="left:3px;top:12.0px;width:14px"></b><b style="left:22px;top:12.0px;width:4px"></b><b style="left:3px;top:14.5px;width:7px"></b><b style="left:3px;top:17.0px;width:8px"></b><b style="left:19px;top:17.0px;width:7px"></b><b style="left:3px;top:19.5px;width:14px"></b><b style="left:21px;top:19.5px;width:5px"></b><b style="left:3px;top:22.0px;width:11px"></b><b style="left:19px;top:22.0px;width:7px"></b><b style="left:3px;top:24.5px;width:7px"></b><b style="left:3px;top:27.0px;width:14px"></b><b style="left:19px;top:27.0px;width:7px"></b><u style="top:28.5px;background:rgba(24,24,24,0.6)"></u><b style="left:4px;top:29.5px;width:7px"></b><b style="left:21px;top:29.5px;width:4px"></b><b style="left:3px;top:32.0px;width:8px"></b><u style="top:33.5px;background:rgba(24,24,24,0.6)"></u><b style="left:4px;top:34.5px;width:5px"></b><b style="left:20px;top:34.5px;width:5px"></b><b style="left:3px;top:37.0px;width:11px"></b><b style="left:20px;top:37.0px;width:6px"></b><u style="top:38.5px;background:rgba(24,24,24,0.6)"></u><b style="left:4px;top:39.5px;width:9px"></b><b style="left:20px;top:39.5px;width:5px"></b><u style="top:41.0px;background:rgba(84,104,150,0.6)"></u><b style="left:4px;top:42.0px;width:8px"></b><b style="left:22px;top:42.0px;width:3px"></b><b style="left:3px;top:44.5px;width:14px"></b><b style="left:3px;top:47.0px;width:14px"></b><b style="left:21px;top:47.0px;width:5px"></b><b style="left:3px;top:49.5px;width:12px"></b><b style="left:21px;top:49.5px;width:5px"></b><b style="left:3px;top:52.0px;width:8px"></b><u style="top:53.5px;background:rgba(24,24,24,0.6)"></u><b style="left:4px;top:54.5px;width:6px"></b><b style="left:20px;top:54.5px;width:5px"></b><b style="left:3px;top:59.5px;width:7px"></b><b style="left:3px;top:62.0px;width:7px"></b></div>
<div class="nd" style="left:417px;top:674px;width:15px;height:27px"><i style="background:#b9464d"></i><b style="left:8px;top:4.5px;width:4px"></b><b style="left:3px;top:7.0px;width:4px"></b><u style="top:8.5px;background:rgba(24,24,24,0.6)"></u><b style="left:4px;top:9.5px;width:4px"></b><b style="left:8px;top:9.5px;width:3px"></b><u style="top:11.0px;background:rgba(24,24,24,0.6)"></u><b style="left:4px;top:12.0px;width:3px"></b><b style="left:7px;top:12.0px;width:4px"></b><b style="left:3px;top:14.5px;width:7px"></b><u style="top:16.0px;background:rgba(24,24,24,0.6)"></u><b style="left:4px;top:17.0px;width:5px"></b><b style="left:7px;top:17.0px;width:4px"></b><u style="top:18.5px;background:rgba(24,24,24,0.6)"></u><b style="left:4px;top:19.5px;width:4px"></b><b style="left:8px;top:19.5px;width:3px"></b><b style="left:3px;top:22.0px;width:4px"></b><b style="left:3px;top:24.5px;width:7px"></b></div>
<div class="nd" style="left:440px;top:673px;width:28px;height:40px"><i style="background:#8a74c6"></i><b style="left:19px;top:4.5px;width:6px"></b><b style="left:3px;top:7.0px;width:12px"></b><b style="left:3px;top:9.5px;width:13px"></b><u style="top:11.0px;background:rgba(24,24,24,0.6)"></u><b style="left:4px;top:12.0px;width:5px"></b><b style="left:20px;top:12.0px;width:4px"></b><b style="left:3px;top:14.5px;width:12px"></b><b style="left:3px;top:17.0px;width:7px"></b><b style="left:21px;top:17.0px;width:4px"></b><b style="left:3px;top:19.5px;width:12px"></b><b style="left:3px;top:22.0px;width:14px"></b><b style="left:3px;top:24.5px;width:11px"></b><b style="left:3px;top:27.0px;width:13px"></b><b style="left:20px;top:27.0px;width:5px"></b><u style="top:28.5px;background:rgba(84,104,150,0.6)"></u><b style="left:4px;top:29.5px;width:5px"></b><b style="left:19px;top:29.5px;width:5px"></b><b style="left:3px;top:32.0px;width:13px"></b><b style="left:3px;top:34.5px;width:10px"></b><b style="left:19px;top:34.5px;width:6px"></b><b style="left:3px;top:37.0px;width:5px"></b><b style="left:21px;top:37.0px;width:4px"></b></div>
<div class="nd" style="left:496px;top:684px;width:16px;height:22px"><i style="background:#c97e45"></i><b style="left:9px;top:4.5px;width:4px"></b><b style="left:3px;top:7.0px;width:5px"></b><b style="left:3px;top:9.5px;width:8px"></b><b style="left:3px;top:12.0px;width:8px"></b><b style="left:10px;top:12.0px;width:3px"></b><b style="left:3px;top:14.5px;width:7px"></b><b style="left:3px;top:17.0px;width:8px"></b><b style="left:10px;top:17.0px;width:3px"></b><u style="top:18.5px;background:rgba(84,104,150,0.6)"></u><b style="left:4px;top:19.5px;width:4px"></b><b style="left:8px;top:19.5px;width:4px"></b></div>
<div class="nd" style="left:526px;top:669px;width:27px;height:23px"><i style="background:#5f97c2"></i><b style="left:16px;top:4.5px;width:8px"></b><b style="left:3px;top:7.0px;width:10px"></b><b style="left:18px;top:7.0px;width:6px"></b><p style="left:4px;top:9.5px;width:14px"></p><b style="left:3px;top:14.5px;width:8px"></b><b style="left:18px;top:14.5px;width:6px"></b><b style="left:3px;top:17.0px;width:5px"></b><b style="left:20px;top:17.0px;width:4px"></b><b style="left:3px;top:19.5px;width:7px"></b><b style="left:21px;top:19.5px;width:3px"></b></div>
<div class="nd" style="left:568px;top:680px;width:16px;height:18px"><i style="background:#b9a43c"></i><b style="left:9px;top:4.5px;width:4px"></b><u style="top:6.0px;background:rgba(24,24,24,0.6)"></u><b style="left:4px;top:7.0px;width:3px"></b><b style="left:9px;top:7.0px;width:3px"></b><b style="left:3px;top:9.5px;width:5px"></b><b style="left:10px;top:9.5px;width:3px"></b><b style="left:3px;top:12.0px;width:6px"></b><b style="left:10px;top:12.0px;width:3px"></b><u style="top:13.5px;background:rgba(24,24,24,0.6)"></u><b style="left:4px;top:14.5px;width:5px"></b><b style="left:9px;top:14.5px;width:3px"></b></div>
<div class="nd" style="left:527px;top:700px;width:27px;height:22px"><i style="background:#5f97c2"></i><b style="left:19px;top:4.5px;width:5px"></b><b style="left:3px;top:7.0px;width:5px"></b><p style="left:4px;top:9.5px;width:14px"></p><u style="top:13.5px;background:rgba(24,24,24,0.6)"></u><b style="left:4px;top:14.5px;width:9px"></b><b style="left:19px;top:14.5px;width:4px"></b><b style="left:3px;top:17.0px;width:13px"></b><b style="left:21px;top:17.0px;width:3px"></b><b style="left:3px;top:19.5px;width:12px"></b></div>
<div class="nd" style="left:599px;top:684px;width:28px;height:66px"><i style="background:#3f9a70"></i><b style="left:20px;top:4.5px;width:5px"></b><u style="top:6.0px;background:rgba(24,24,24,0.6)"></u><b style="left:4px;top:7.0px;width:4px"></b><b style="left:21px;top:7.0px;width:3px"></b><b style="left:3px;top:9.5px;width:6px"></b><b style="left:3px;top:12.0px;width:6px"></b><b style="left:3px;top:14.5px;width:11px"></b><u style="top:16.0px;background:rgba(24,24,24,0.6)"></u><b style="left:4px;top:17.0px;width:8px"></b><b style="left:20px;top:17.0px;width:4px"></b><u style="top:18.5px;background:rgba(24,24,24,0.6)"></u><b style="left:4px;top:19.5px;width:8px"></b><b style="left:21px;top:19.5px;width:3px"></b><u style="top:21.0px;background:rgba(24,24,24,0.6)"></u><b style="left:4px;top:22.0px;width:7px"></b><b style="left:20px;top:22.0px;width:4px"></b><b style="left:3px;top:24.5px;width:7px"></b><b style="left:3px;top:27.0px;width:13px"></b><b style="left:3px;top:29.5px;width:5px"></b><b style="left:22px;top:29.5px;width:3px"></b><b style="left:3px;top:32.0px;width:10px"></b><b style="left:3px;top:34.5px;width:5px"></b><b style="left:3px;top:37.0px;width:13px"></b><b style="left:20px;top:37.0px;width:5px"></b><b style="left:3px;top:39.5px;width:12px"></b><u style="top:41.0px;background:rgba(24,24,24,0.6)"></u><b style="left:4px;top:42.0px;width:7px"></b><b style="left:19px;top:42.0px;width:5px"></b><b style="left:3px;top:44.5px;width:6px"></b><b style="left:3px;top:47.0px;width:8px"></b><u style="top:48.5px;background:rgba(24,24,24,0.6)"></u><b style="left:4px;top:49.5px;width:9px"></b><b style="left:21px;top:49.5px;width:3px"></b><b style="left:3px;top:52.0px;width:11px"></b><u style="top:53.5px;background:rgba(84,104,150,0.6)"></u><b style="left:4px;top:54.5px;width:3px"></b><b style="left:20px;top:54.5px;width:4px"></b><b style="left:3px;top:57.0px;width:5px"></b><b style="left:21px;top:57.0px;width:4px"></b><b style="left:3px;top:59.5px;width:6px"></b><b style="left:18px;top:59.5px;width:7px"></b><b style="left:3px;top:62.0px;width:11px"></b></div>
<div class="nd" style="left:496px;top:734px;width:16px;height:22px"><i style="background:#c97e45"></i><b style="left:8px;top:4.5px;width:5px"></b><b style="left:3px;top:7.0px;width:3px"></b><b style="left:10px;top:7.0px;width:3px"></b><b style="left:3px;top:9.5px;width:6px"></b><u style="top:11.0px;background:rgba(84,104,150,0.6)"></u><b style="left:4px;top:12.0px;width:4px"></b><b style="left:8px;top:12.0px;width:4px"></b><b style="left:3px;top:14.5px;width:7px"></b><b style="left:10px;top:14.5px;width:3px"></b><b style="left:3px;top:17.0px;width:7px"></b><b style="left:10px;top:17.0px;width:3px"></b><b style="left:3px;top:19.5px;width:3px"></b><b style="left:9px;top:19.5px;width:4px"></b></div>
<div class="nd" style="left:567px;top:740px;width:17px;height:19px"><i style="background:#8a74c6"></i><b style="left:9px;top:4.5px;width:5px"></b><b style="left:3px;top:7.0px;width:8px"></b><b style="left:10px;top:7.0px;width:4px"></b><b style="left:3px;top:9.5px;width:6px"></b><b style="left:11px;top:9.5px;width:3px"></b><b style="left:3px;top:12.0px;width:4px"></b><b style="left:3px;top:14.5px;width:3px"></b></div>
<div class="nd" style="left:672px;top:450px;width:18px;height:21px"><i style="background:#b9a43c"></i><b style="left:10px;top:4.5px;width:5px"></b><b style="left:3px;top:7.0px;width:3px"></b><u style="top:8.5px;background:rgba(24,24,24,0.6)"></u><b style="left:4px;top:9.5px;width:5px"></b><b style="left:10px;top:9.5px;width:4px"></b><b style="left:3px;top:12.0px;width:6px"></b><b style="left:12px;top:12.0px;width:3px"></b><b style="left:3px;top:14.5px;width:8px"></b><b style="left:3px;top:17.0px;width:6px"></b><b style="left:11px;top:17.0px;width:4px"></b></div>
<div class="nd" style="left:720px;top:549px;width:17px;height:13px"><i style="background:#3f9a70"></i><b style="left:10px;top:4.5px;width:4px"></b><b style="left:3px;top:7.0px;width:7px"></b><b style="left:11px;top:7.0px;width:3px"></b><b style="left:3px;top:9.5px;width:7px"></b><b style="left:11px;top:9.5px;width:3px"></b></div>
<div class="nd" style="left:767px;top:556px;width:16px;height:14px"><i style="background:#3f9a70"></i><b style="left:10px;top:4.5px;width:3px"></b><b style="left:3px;top:7.0px;width:5px"></b><b style="left:9px;top:7.0px;width:4px"></b><u style="top:8.5px;background:rgba(24,24,24,0.6)"></u><b style="left:4px;top:9.5px;width:3px"></b><b style="left:8px;top:9.5px;width:4px"></b></div>
<div class="nd" style="left:839px;top:555px;width:17px;height:15px"><i style="background:#3f9a70"></i><b style="left:9px;top:4.5px;width:5px"></b><u style="top:6.0px;background:rgba(84,104,150,0.6)"></u><b style="left:4px;top:7.0px;width:3px"></b><b style="left:10px;top:7.0px;width:3px"></b><u style="top:8.5px;background:rgba(84,104,150,0.6)"></u><b style="left:4px;top:9.5px;width:3px"></b><b style="left:9px;top:9.5px;width:4px"></b><b style="left:3px;top:12.0px;width:7px"></b><b style="left:10px;top:12.0px;width:4px"></b></div>
<div class="nd" style="left:927px;top:556px;width:17px;height:15px"><i style="background:#b9464f"></i><b style="left:9px;top:4.5px;width:5px"></b><u style="top:6.0px;background:rgba(24,24,24,0.6)"></u><b style="left:4px;top:7.0px;width:5px"></b><b style="left:9px;top:7.0px;width:4px"></b><b style="left:3px;top:9.5px;width:4px"></b><b style="left:11px;top:9.5px;width:3px"></b><b style="left:3px;top:12.0px;width:5px"></b><b style="left:10px;top:12.0px;width:4px"></b></div>
</div>
</div>
<div class="abs" style="left:0;top:66px;width:1200px;height:3px;background:linear-gradient(180deg,rgba(0,0,0,0.55),rgba(0,0,0,0))"></div>
<svg class="abs" style="left:0;top:80px" width="8" height="12" viewBox="0 0 8 12"><polyline points="1.5,2.5 4.8,6 1.5,9.5" fill="none" stroke="#7a7a7a" stroke-width="1.3"/></svg>
<span class="abs" style="left:28px;top:811px;color:#fff;font-size:10.7px">Main Paint</span>
<div id="status">
<svg class="abs" style="left:0;top:0" width="600" height="17" viewBox="0 850 600 17">
<g fill="none" stroke="#9a9a9a" stroke-width="1.3">
<rect x="11.5" y="853.5" width="9.5" height="16" rx="3.5"/>
<rect x="72.3" y="853.5" width="9.5" height="16" rx="3.5"/>
<rect x="239" y="853.5" width="9.5" height="16" rx="3.5"/>
<rect x="466.3" y="853.5" width="9.5" height="16" rx="3.5"/>
</g>
<path d="M12.2 857 Q12.2 854.2 15 854.2 H16.2 V860 H12.2 Z" fill="#c8c8c8"/>
<path d="M73 857 Q73 854.2 75.8 854.2 H77 V860 H73 Z" fill="#c8c8c8"/>
<rect x="83.5" y="852.5" width="1.2" height="7" fill="#9a9a9a"/><rect x="85.6" y="854" width="1" height="4" fill="#9a9a9a"/>
<rect x="242.5" y="855.2" width="2.6" height="5.5" rx="1.3" fill="#c8c8c8"/>
<path d="M471.8 854.2 H472.6 Q475.2 854.2 475.2 857 V860 H471.8 Z" fill="#c8c8c8"/>
</svg>
<span style="left:31px">Select</span>
<span style="left:94px">Box Select</span>
<span style="left:259px">Pan View</span>
<span style="left:486px">Node Context Menu</span>
<span style="left:956px">Scene Collection | Plane_Body | Вершин:29,701 |</span>
</div>
</body></html>
